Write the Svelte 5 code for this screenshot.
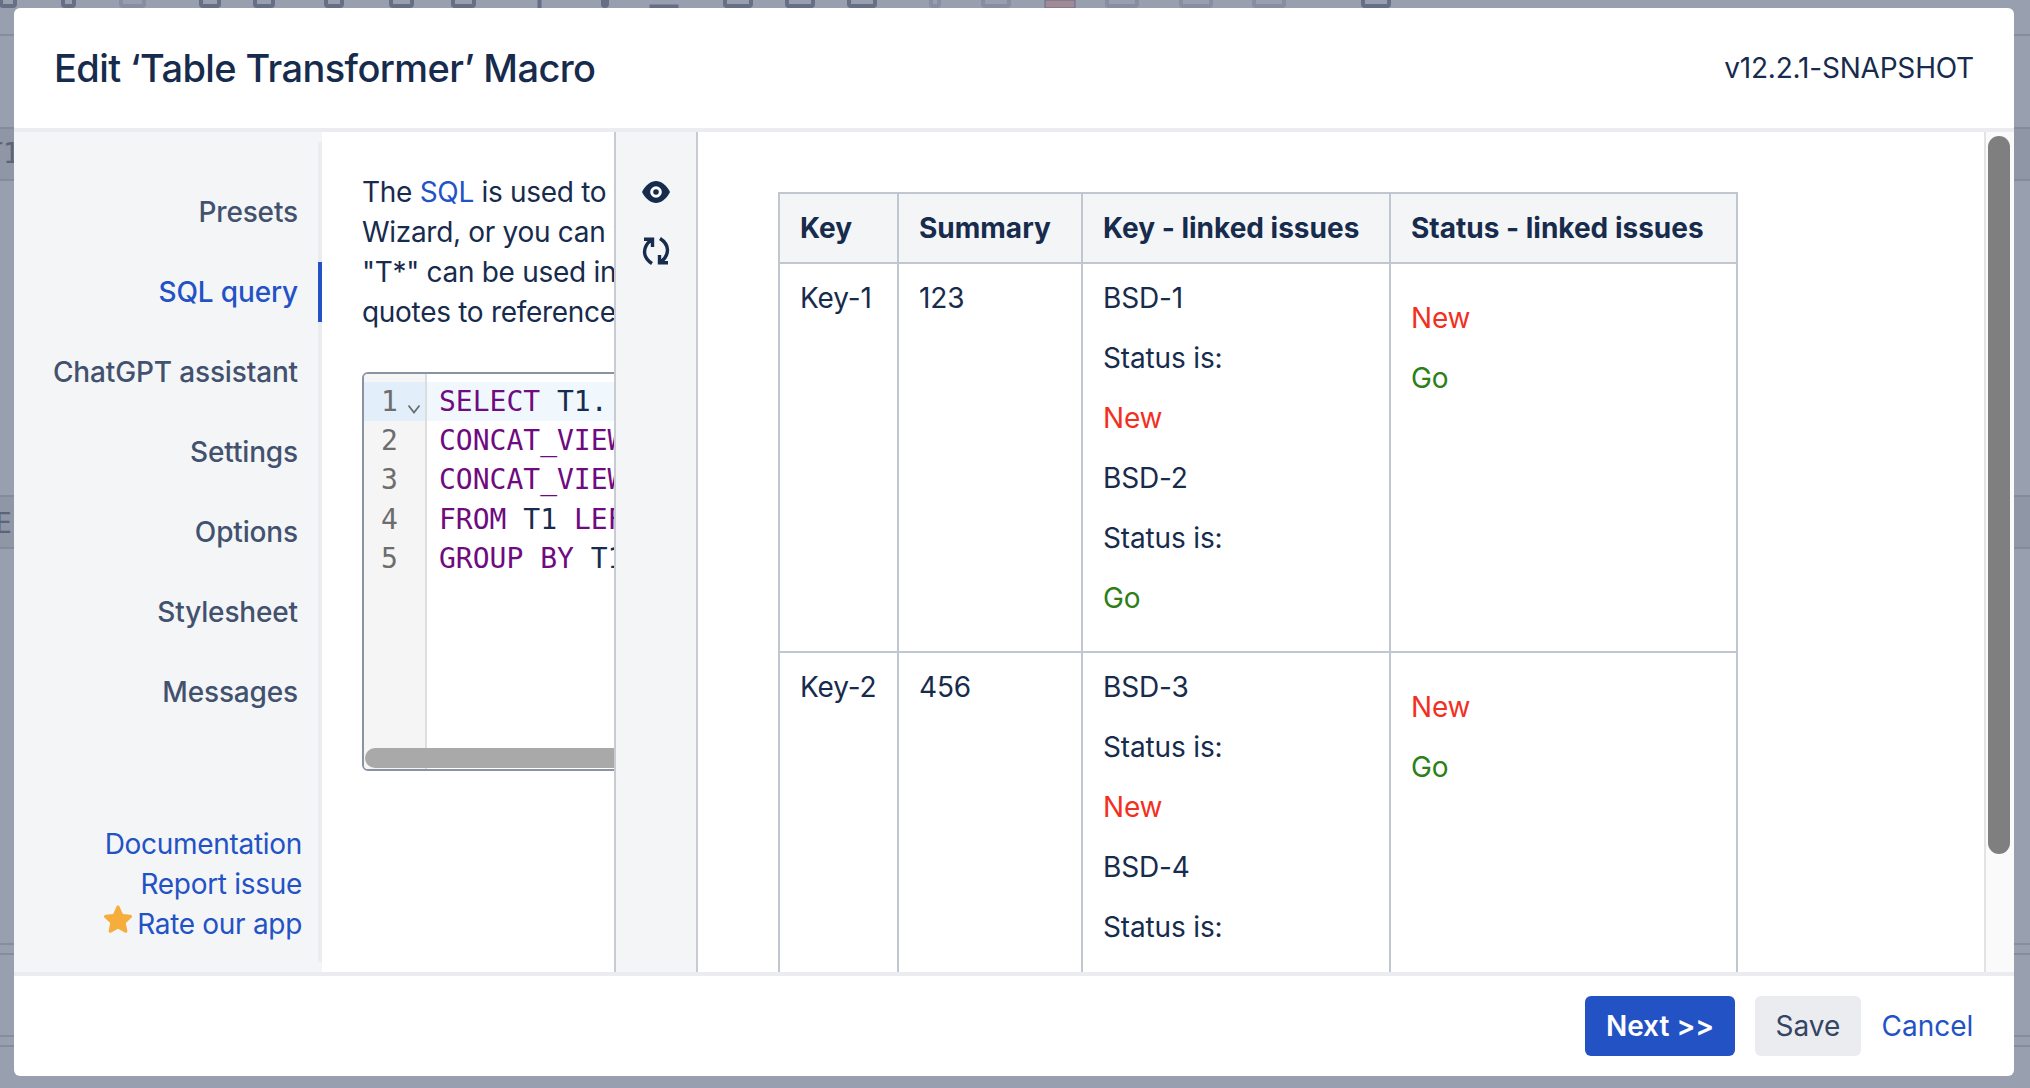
<script>
  const navItems = ['Presets', 'SQL query', 'ChatGPT assistant', 'Settings', 'Options', 'Stylesheet', 'Messages'];
  const code = [
    [['k', 'SELECT'], ['p', ' T1.'], ['p', "'Key', T1.'Summary',"]],
    [['k', 'CONCAT_VIEW_AGGR'], ['p', "(T2.'Key', T2.'Status')"]],
    [['k', 'CONCAT_VIEW_AGGR'], ['p', "(T2.'Status')"]],
    [['k', 'FROM'], ['p', ' T1 '], ['k', 'LEFT JOIN'], ['p', ' T2']],
    [['k', 'GROUP BY'], ['p', " T1.'Key'"]]
  ];
  const rows = [
    { key: 'Key-1', summary: '123', a: 'BSD-1', b: 'BSD-2' },
    { key: 'Key-2', summary: '456', a: 'BSD-3', b: 'BSD-4' }
  ];
  const strips = [
    [0, 16, 0], [62, 13, 0], [120, 25, 1], [200, 20, 0], [254, 20, 0], [325, 18, 0], [390, 23, 0], [452, 23, 0],
    [602, 6, 0], [724, 28, 0], [786, 28, 0], [848, 28, 0], [930, 10, 1], [982, 28, 1], [1106, 32, 1], [1180, 32, 1], [1253, 32, 1], [1362, 28, 0]
  ];
</script>

<div class="page">
  <div class="backdrop" aria-hidden="true">
    <svg class="strip" width="2030" height="8" viewBox="0 0 2030 8">
      {#each strips as [x, w, light]}
        <path d={`M${x + 1} 0V4a2 2 0 0 0 2 2H${x + w - 3}a2 2 0 0 0 2-2V0`} class:light fill="none" stroke-width="4" />
      {/each}
      <rect x="538" y="0" width="3" height="8" fill="#676f87" />
      <rect x="650" y="5" width="28" height="3" fill="#676f87" />
      <rect x="1045" y="0" width="30" height="8" fill="#a18a96" />
    </svg>
    <div class="band band-a"><span>T1</span></div>
    <div class="band band-b"><span>E</span></div>
    <div class="rule rule-t"></div>
    <div class="rule rule-a"></div>
    <div class="rule rule-b"></div>
    <div class="rule rule-c"></div>
    <div class="rule rule-d"></div>
  </div>

  <div class="dialog">
    <header class="head">
      <h1>Edit ‘Table Transformer’ Macro</h1>
      <span class="version">v12.2.1-SNAPSHOT</span>
    </header>

    <div class="body">
      <aside class="side">
        <div class="side-inner">
          <nav class="nav">
            {#each navItems as item}
              <div class="nav-item" class:active={item === 'SQL query'}>{item}</div>
            {/each}
          </nav>
          <div class="links">
            <div>Documentation</div>
            <div>Report issue</div>
            <div class="rate">
              <svg class="star" width="30" height="30" viewBox="0 0 28 28">
                <path d="M14 1.5c.8 0 1.3.5 1.6 1.2l2.9 6.6 7 .7c1.7.2 2.3 1.7 1 2.9l-5.2 4.8 1.4 7.2c.3 1.6-1 2.5-2.4 1.7L14 23.200l-6.300 3.400c-1.400.8-2.700-.1-2.400-1.700l1.400-7.200-5.200-4.800c-1.300-1.200-.7-2.700 1-2.900l7-.7 2.900-6.600c.3-.7.8-1.200 1.600-1.200z" fill="#f5ae3c" />
              </svg>
              <span>Rate our app</span>
            </div>
          </div>
        </div>
      </aside>

      <section class="query">
        <div class="intro">
          <div>The <span class="link">SQL</span> is used to transform</div>
          <div>Wizard, or you can write</div>
          <div>"T*" can be used in the</div>
          <div>quotes to reference the</div>
        </div>
        <div class="editor">
          <div class="gutter">
            {#each code as _, i}
              <div class="num" class:on={i === 0}>
                <span>{i + 1}</span>
                {#if i === 0}
                  <svg class="fold" width="14" height="10" viewBox="0 0 14 10"><path d="M1.500 1.500L7 8.500l5.500-7" fill="none" stroke="#6d6d6d" stroke-width="1.800" /></svg>
                {/if}
              </div>
            {/each}
          </div>
          <div class="code">
            {#each code as line, i}
              <div class="line" class:on={i === 0}>{#each line as [t, s]}<span class={t}>{s}</span>{/each}</div>
            {/each}
          </div>
          <div class="hbar"></div>
        </div>
      </section>

      <div class="tools">
        <svg width="28" height="22" viewBox="0 0 28 22">
          <path d="M0 11C4 3.500 9 0 14 0s10 3.500 14 11c-4 7.500-9 11-14 11S4 18.500 0 11z" fill="#172b4d" />
          <circle cx="14" cy="11" r="5.800" fill="#fff" />
          <circle cx="14" cy="11" r="2.800" fill="#172b4d" />
        </svg>
        <svg width="28" height="28" viewBox="0 0 28 28">
          <path d="M10 26.500C0.500 20.500 0 10.500 9 3M2 2.200h8.500V10M18 1.500C27.500 7.500 28 17.500 19 25M26 25.800h-8.500V18" fill="none" stroke="#172b4d" stroke-width="3.400" />
        </svg>
      </div>

      <section class="preview">
        <table>
          <colgroup>
            <col class="c1" /><col class="c2" /><col class="c3" /><col class="c4" />
          </colgroup>
          <thead>
            <tr><th>Key</th><th>Summary</th><th>Key - linked issues</th><th>Status - linked issues</th></tr>
          </thead>
          <tbody>
            {#each rows as row}
              <tr>
                <td><p>{row.key}</p></td>
                <td><p>{row.summary}</p></td>
                <td>
                  <p>{row.a}</p>
                  <p>Status is:</p>
                  <p class="red">New</p>
                  <p>{row.b}</p>
                  <p>Status is:</p>
                  <p class="green">Go</p>
                </td>
                <td class="status">
                  <p class="red">New</p>
                  <p class="green">Go</p>
                </td>
              </tr>
            {/each}
          </tbody>
        </table>
      </section>

      <div class="vbar"><div class="thumb"></div></div>
    </div>

    <footer class="foot">
      <button class="btn primary">Next &gt;&gt;</button>
      <button class="btn secondary">Save</button>
      <button class="btn cancel">Cancel</button>
    </footer>
  </div>
</div>

<style>
  :global(body) {
    margin: 0;
    font-family: Inter, "Noto Sans", sans-serif;
    color: #172b4d;
  }
  .page {
    position: relative;
    width: 2030px;
    height: 1088px;
    box-sizing: border-box;
    padding: 8px 16px 12px 14px;
    display: flex;
    overflow: hidden;
    background: #989fae;
  }
  .backdrop {
    position: absolute;
    inset: 0;
  }
  .strip {
    position: absolute;
    top: 0;
    left: 0;
    stroke: #676f87;
  }
  .strip .light {
    stroke: #878ea1;
  }
  .band {
    position: absolute;
    left: 0;
    right: 0;
    height: 54px;
    background: #8f96a5;
    border-top: 2px solid #848b9b;
    border-bottom: 2px solid #848b9b;
    box-sizing: border-box;
    font: 28px "DejaVu Sans Mono", monospace;
    color: #5c6478;
    overflow: hidden;
  }
  .band span {
    position: absolute;
    line-height: 50px;
  }
  .band-a { top: 127px; }
  .band-a span { left: -14px; }
  .band-b { top: 495px; }
  .band-b span { left: -5px; top: 2px; }
  .rule {
    position: absolute;
    left: 0;
    right: 0;
    height: 2px;
    background: #868d9d;
  }
  .rule-t { top: 34px; }
  .rule-a { top: 943px; }
  .rule-b { top: 953px; }
  .rule-c { top: 1035px; }
  .rule-d { top: 1045px; }

  .dialog {
    position: relative;
    flex: 1;
    display: flex;
    flex-direction: column;
    background: #fff;
    border-radius: 6px;
    overflow: hidden;
    min-width: 0;
  }
  .head {
    height: 124px;
    flex: none;
    box-sizing: border-box;
    border-bottom: 4px solid #ebecf0;
    padding: 0 40px;
    display: flex;
    align-items: center;
    justify-content: space-between;
  }
  h1 {
    margin: 0;
    font-size: 38px;
    font-weight: 500;
    line-height: 48px;
    letter-spacing: -0.6px;
    color: #172b4d;
  }
  .version {
    font-size: 28px;
    line-height: 40px;
    letter-spacing: -0.2px;
  }
  .body {
    flex: 1;
    display: flex;
    min-height: 0;
    overflow: hidden;
  }
  .side {
    flex: none;
    width: 308px;
    box-sizing: border-box;
    padding: 10px 0;
    background: #f4f5f7;
    display: flex;
  }
  .side-inner {
    flex: 1;
    border-right: 4px solid #ebecf0;
    display: flex;
    flex-direction: column;
  }
  .nav {
    padding-top: 30px;
  }
  .nav-item {
    position: relative;
    height: 80px;
    line-height: 80px;
    text-align: right;
    padding-right: 20px;
    font-size: 28px;
    font-weight: 500;
    letter-spacing: -0.15px;
    color: #42526e;
  }
  .nav-item.active {
    color: #2352c5;
  }
  .nav-item.active::after {
    content: "";
    position: absolute;
    right: -4px;
    top: 10px;
    width: 4px;
    height: 60px;
    background: #2352c5;
  }
  .links {
    margin-top: auto;
    padding: 0 16px 18px 0;
    text-align: right;
    font-size: 28px;
    line-height: 40px;
    letter-spacing: -0.3px;
    color: #2352c5;
  }
  .rate {
    display: flex;
    justify-content: flex-end;
    align-items: center;
    gap: 4px;
  }
  .star {
    margin-top: -10px;
  }
  .query {
    flex: none;
    width: 292px;
    box-sizing: border-box;
    padding: 40px 0 0 40px;
    overflow: hidden;
  }
  .intro {
    font-size: 28px;
    line-height: 40px;
    letter-spacing: -0.3px;
    white-space: nowrap;
  }
  .link {
    color: #2352c5;
  }
  .editor {
    position: relative;
    margin-top: 40px;
    width: 620px;
    height: 399px;
    box-sizing: border-box;
    border: 2px solid #8993a4;
    border-radius: 6px;
    display: flex;
    overflow: hidden;
    font: 28px/39.2px "DejaVu Sans Mono", monospace;
  }
  .gutter {
    flex: none;
    width: 63px;
    box-sizing: border-box;
    padding-top: 8px;
    background: #f5f5f5;
    border-right: 2px solid #ddd;
    color: #6d6d6d;
  }
  .num {
    position: relative;
    height: 39.2px;
    padding-left: 17px;
  }
  .num.on {
    background: #e2effb;
  }
  .fold {
    position: absolute;
    left: 43px;
    top: 22px;
  }
  .code {
    flex: 1;
    padding-top: 8px;
    white-space: pre;
    overflow: hidden;
  }
  .line {
    height: 39.2px;
    padding-left: 12px;
  }
  .line.on {
    background: #f1f8fd;
  }
  .k {
    color: #6f0a80;
  }
  .p {
    color: #172b4d;
  }
  .hbar {
    position: absolute;
    left: 1px;
    bottom: 1px;
    width: 400px;
    height: 20px;
    background: #a9a9a9;
    border-radius: 10px;
  }
  .tools {
    flex: none;
    width: 84px;
    box-sizing: border-box;
    background: #f4f5f7;
    border-left: 2px solid #c8cbd1;
    border-right: 2px solid #c8cbd1;
    padding-top: 49px;
    display: flex;
    flex-direction: column;
    align-items: center;
    gap: 34px;
  }
  .preview {
    flex: 1;
    min-width: 0;
    box-sizing: border-box;
    padding: 60px 0 0 80px;
    overflow: hidden;
  }
  table {
    border-collapse: collapse;
    table-layout: fixed;
    width: 958px;
    font-size: 28px;
    line-height: 40px;
    letter-spacing: -0.15px;
  }
  .c1 { width: 119px; }
  .c2 { width: 184px; }
  .c3 { width: 308px; }
  .c4 { width: 347px; }
  th, td {
    border: 2px solid #c1c7d0;
    padding: 14px 20px;
    text-align: left;
    vertical-align: top;
    white-space: nowrap;
  }
  th {
    background: #f4f5f7;
    font-weight: 700;
    letter-spacing: 0;
  }
  td {
    padding-bottom: 13px;
  }
  p {
    margin: 0 0 20px;
  }
  .status {
    padding-top: 34px;
  }
  .red {
    color: #f3301f;
  }
  .green {
    color: #2b8016;
  }
  .vbar {
    flex: none;
    width: 30px;
    box-sizing: border-box;
    background: #fafafa;
    border-left: 2px solid #e3e3e3;
    padding: 4px 4px 0 2px;
  }
  .thumb {
    height: 718px;
    border-radius: 11px;
    background: #7f7f7f;
  }
  .foot {
    flex: none;
    height: 104px;
    box-sizing: border-box;
    border-top: 4px solid #ebecf0;
    padding: 20px 40px 0 0;
    display: flex;
    justify-content: flex-end;
    align-items: flex-start;
    gap: 20px;
  }
  .btn {
    height: 60px;
    border: 0;
    border-radius: 6px;
    font: inherit;
    font-size: 28px;
    padding: 0;
    background: none;
  }
  .primary {
    width: 150px;
    background: #2352c5;
    color: #fff;
    font-weight: 600;
  }
  .secondary {
    width: 106px;
    background: #ebecf0;
    color: #344563;
  }
  .cancel {
    width: 93px;
    color: #2352c5;
  }
</style>
